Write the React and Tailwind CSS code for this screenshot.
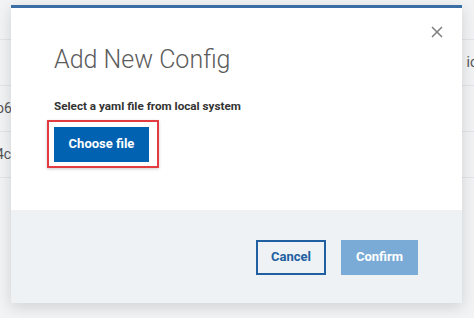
import { X } from "lucide-react";

const rows = [
  { h: "h-[40px]", left: "", right: "" },
  { h: "h-[46px]", left: "", right: "io" },
  { h: "h-[46px]", left: "o6", right: "" },
  { h: "h-[46px]", left: "4c", right: "" },
];

const App = () => {
  return (
    <div className="relative w-[474px] h-[318px] overflow-hidden bg-[#f1f3f5] font-['Roboto',sans-serif]">
      {/* table behind the dialog */}
      <div className="flex flex-col">
        {rows.map((r, i) => (
          <div key={i} className={`${r.h} flex items-center justify-between border-b border-[#e1e4e8] text-[14px] text-[#555]`}>
            <span className="-ml-[4px]">{r.left}</span>
            <span className="-mr-[4px]">{r.right}</span>
          </div>
        ))}
      </div>

      {/* dialog */}
      <div className="absolute left-[11px] top-[5px] w-[451px] h-[298px] flex flex-col bg-white border-t-[3px] border-[#3a6ea5] shadow-[0_4px_14px_rgba(0,0,0,0.14)]">
        <button className="absolute right-[16px] top-[15px] text-[#808080]">
          <X size={18} strokeWidth={2.2} />
        </button>
        <div className="flex-1 flex flex-col pl-[43px] pt-[37px]">
          <h2 className="text-[25px] font-light leading-[30px] text-[#5c5c5c]">Add New Config</h2>
          <p className="mt-[24px] text-[11.7px] font-bold leading-[14px] text-[#333]">Select a yaml file from local system</p>
          <div className="mt-[7px] -ml-[7px] w-[112px] h-[48px] flex items-center pl-[5px] border-2 border-[#e23c42] shadow-[0_1px_3px_rgba(0,0,0,0.2)]">
            <button className="w-[95px] h-[35px] bg-[#0062b1] text-white text-[13px] font-bold">Choose file</button>
          </div>
        </div>
        <div className="h-[93px] flex items-center justify-end gap-[15px] pr-[44px] pt-[1px] bg-[#eef2f5]">
          <button className="w-[70px] h-[35px] border-2 border-[#2060a0] text-[#2060a0] text-[13px] font-bold">Cancel</button>
          <button className="w-[77px] h-[35px] bg-[#7aabd6] text-white text-[13px] font-bold">Confirm</button>
        </div>
      </div>
    </div>
  );
};

export default App;
